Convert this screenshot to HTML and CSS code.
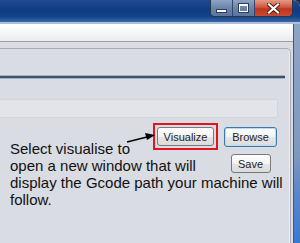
FILE: index.html
```html
<!DOCTYPE html>
<html lang="en">
<head>
    <meta charset="UTF-8">
    <meta name="viewport" content="width=device-width, initial-scale=1.0">
    <title>Visualize</title>
    <link rel="stylesheet" href="styles.css">
</head>
<body>
    <div class="window">
        <div class="caption">
            <div class="caps">
                <div class="cap cap-min"><span class="min-glyph"></span></div>
                <div class="cap cap-max"><span class="max-glyph"></span></div>
                <div class="cap cap-close">
                    <svg width="13" height="11" viewBox="0 0 13 11">
                        <path d="M2 1.5 L11 9.5 M11 1.5 L2 9.5" stroke="#4a1a12" stroke-width="4" stroke-linecap="square"/>
                        <path d="M2 1.5 L11 9.5 M11 1.5 L2 9.5" stroke="#fff" stroke-width="2.2" stroke-linecap="square"/>
                    </svg>
                </div>
            </div>
        </div>
        <div class="frame-strip"></div>
        <div class="main">
            <div class="client">
                <div class="menubar"></div>
                <div class="groupbox">
                    <div class="sep"></div>
                    <div class="field"></div>
                    <div class="lower">
                        <div class="buttons">
                            <div class="highlight">
                                <button class="btn btn-vis">Visualize</button>
                            </div>
                            <button class="btn btn-browse">Browse</button>
                            <button class="btn btn-save">Save</button>
                        </div>
                        <p class="note">Select visualise to<br>open a new window that will<br>display the Gcode path your machine will<br>follow.</p>
                    </div>
                </div>
            </div>
            <div class="rframe"></div>
        </div>
    </div>

    <!-- annotation arrow pointing at the Visualize button -->
    <svg class="arrow" width="300" height="243" viewBox="0 0 300 243">
        <line x1="127" y1="142" x2="147" y2="137" stroke="#000" stroke-width="1.6"/>
        <polygon points="155,135 145,133 147,140" fill="#000"/>
    </svg>
</body>
</html>
```

FILE: styles.css
```css
body {
    margin: 0;
    width: 300px;
    height: 243px;
    overflow: hidden;
    position: relative;
    font-family: "Liberation Sans", Arial, sans-serif;
    background: #232a35;
}

.window {
    height: 243px;
    display: flex;
    flex-direction: column;
    border-top-right-radius: 7px;
    overflow: hidden;
    background: #d9dce3;
}

.caption {
    height: 22px;
    flex: none;
    display: flex;
    justify-content: flex-end;
    padding-right: 7px;
    background: linear-gradient(#1f4d8f, #0f3c82 45%, #14448a 75%, #3a67a4);
}

.caps {
    display: flex;
    height: 16px;
    border: 1px solid #27354f;
    border-top: none;
    border-radius: 0 0 5px 5px;
    overflow: hidden;
    box-shadow: inset 0 0 0 1px rgba(255, 255, 255, 0.35);
}

.cap {
    display: flex;
    align-items: center;
    justify-content: center;
}

.cap-min {
    width: 22px;
    background: linear-gradient(#8fa4c4, #6a83aa 50%, #5a76a0);
    border-right: 1px solid #34466a;
    align-items: flex-end;
    padding-bottom: 3px;
    box-sizing: border-box;
}

.cap-max {
    width: 21px;
    background: linear-gradient(#8fa4c4, #6a83aa 50%, #5a76a0);
    border-right: 1px solid #34466a;
}

.cap-close {
    width: 37px;
    background: linear-gradient(#e59a86, #d0563e 45%, #bd3520 55%, #c84a30);
}

.min-glyph {
    width: 9px;
    height: 2px;
    background: #fff;
    border: 1px solid #2e3c55;
}

.max-glyph {
    width: 7px;
    height: 5px;
    border: 1px solid #fff;
    border-top-width: 2px;
    outline: 1px solid #2e3c55;
}

.frame-strip {
    height: 2px;
    flex: none;
    background: #a9c1de;
}

.main {
    flex: 1;
    display: flex;
}

.client {
    flex: 1;
    display: flex;
    flex-direction: column;
    background: #d9dce3;
}

.menubar {
    height: 17px;
    flex: none;
    background: linear-gradient(#fefefe, #f6f7f8 50%, #e9ebee);
    border-bottom: 1px solid #9aa0a9;
}

.groupbox {
    flex: 1;
    margin: 6px 2px 0 -10px;
    border: 1px solid #a7abb3;
    border-bottom: none;
    border-radius: 5px 5px 0 0;
    box-shadow: inset -1px 0 0 #eceef2;
}

.sep {
    margin: 26px 5px 0 0;
    height: 2px;
    background: #3e5167;
    border-top: 1px solid #a3b3c6;
    border-bottom: 1px solid #a3b3c6;
}

.field {
    margin: 20px 12px 0 0;
    height: 17px;
    background: #e2e4e9;
    border: 1px solid #d2d5db;
}

.lower {
    margin-top: 5px;
    display: grid;
}

.buttons {
    grid-area: 1 / 1;
    justify-self: end;
    align-self: start;
    margin-right: 13px;
    display: grid;
    grid-template-columns: auto auto;
    column-gap: 6px;
    row-gap: 4px;
    align-items: center;
}

.highlight {
    border: 2px solid #e3141b;
    padding: 2px;
}

.btn {
    display: block;
    font-family: "Liberation Sans", Arial, sans-serif;
    font-size: 11px;
    color: #1e1e1e;
    padding: 0;
    border: 1px solid #767a80;
    border-radius: 3px;
    background: linear-gradient(#fdfdfd, #f3f3f3 50%, #e6e6e6 51%, #dcdcdc);
}

.btn-vis {
    width: 57px;
    height: 19px;
}

.btn-browse {
    width: 53px;
    height: 20px;
    border-color: #3d7bad;
    box-shadow: inset 0 0 0 1px #b8dbf3;
}

.btn-save {
    grid-column: 2;
    justify-self: center;
    width: 40px;
    height: 19px;
}

.note {
    grid-area: 1 / 1;
    margin: 17px 0 0 19px;
    font-size: 15px;
    line-height: 17px;
    color: #111;
    white-space: nowrap;
}

.rframe {
    width: 7px;
    flex: none;
    border-left: 1px solid #4d5666;
    box-sizing: border-box;
    background: linear-gradient(#8ea5c5, #7f98bd 60%, #5f88c6 75%, #3a78d2);
}

.arrow {
    position: absolute;
    left: 0;
    top: 0;
    pointer-events: none;
}
```
